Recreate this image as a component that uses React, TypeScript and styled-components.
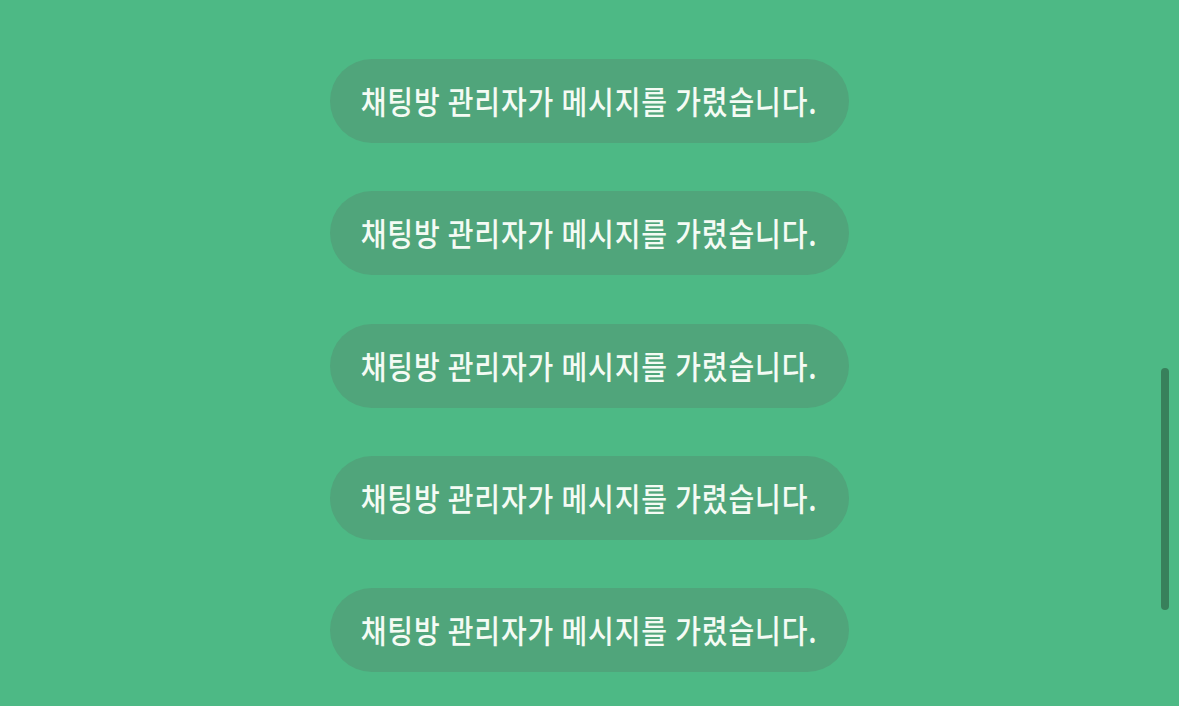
import React from 'react';
import styled, { createGlobalStyle } from 'styled-components';

const GlobalStyle = createGlobalStyle`
    html, body {
        margin: 0;
        padding: 0;
        background: #4db985;
        overflow: hidden;
    }
`;

const SPage = styled.div`
    position: relative;
    width: 1179px;
    height: 706px;
    background: #4db985;
    display: flex;
    flex-direction: column;
    align-items: center;
    gap: 48.3px;
    padding-top: 59px;
    box-sizing: border-box;
    font-family: 'Noto Sans CJK KR', 'Noto Sans', sans-serif;
`;

const SNotice = styled.div`
    width: 519px;
    height: 84px;
    flex-shrink: 0;
    border-radius: 42px;
    background: #50a57b;
    display: flex;
    align-items: center;
    justify-content: center;
    color: #f4fbf4;
    white-space: nowrap;
`;

const SNoticeText = styled.span`
    display: inline-block;
    font-size: 32px;
    font-weight: 500;
    line-height: 1;
    letter-spacing: 1px;
    transform: scaleX(0.875);
    margin-top: -2px;
`;

const SScrollThumb = styled.div`
    position: absolute;
    right: 10px;
    top: 368px;
    width: 8px;
    height: 242px;
    border-radius: 4px;
    background: #38805b;
`;

const notices = [1, 2, 3, 4, 5];

export default function App() {
    return (
        <>
            <GlobalStyle />
            <SPage>
                {notices.map((n) => (
                    <SNotice key={n}>
                        <SNoticeText>채팅방 관리자가 메시지를 가렸습니다.</SNoticeText>
                    </SNotice>
                ))}
                <SScrollThumb />
            </SPage>
        </>
    );
}
